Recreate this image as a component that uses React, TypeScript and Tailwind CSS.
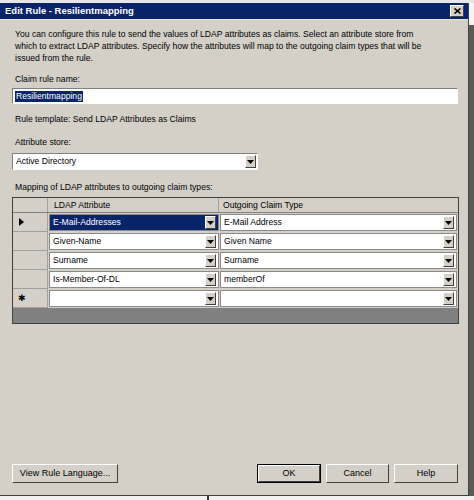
import React from 'react';

const font = { fontFamily: '"Liberation Sans", Arial, sans-serif' };

interface Mapeo {
  ldap: string;
  claim: string;
}

const filas: Mapeo[] = [
  { ldap: 'E-Mail-Addresses', claim: 'E-Mail Address' },
  { ldap: 'Given-Name', claim: 'Given Name' },
  { ldap: 'Surname', claim: 'Surname' },
  { ldap: 'Is-Member-Of-DL', claim: 'memberOf' },
];

function Flecha() {
  return (
    <svg width="7" height="4" viewBox="0 0 7 4">
      <path d="M0 0h7L3.5 4z" fill="#000" />
    </svg>
  );
}

// boton pequeño del combo
function BotonCombo({ alto = 'h-[13px]' }: { alto?: string }) {
  return (
    <div className={`w-[11px] ${alto} shrink-0 bg-[#d4d0c8] border border-t-white border-l-white border-r-[#404040] border-b-[#404040] flex items-center justify-center`}>
      <Flecha />
    </div>
  );
}

function Celda({ texto, sel, ancho }: { texto: string; sel?: boolean; ancho: string }) {
  return (
    <div className={`${ancho} h-[17px] flex items-center border border-[#8a8a8a] pr-[2px] ${sel ? 'bg-[#0a246a] text-white' : 'bg-white text-black'}`}>
      <span className="flex-1 pl-[3px] whitespace-nowrap overflow-hidden">{texto}</span>
      <BotonCombo />
    </div>
  );
}

function Boton({ texto, ancho, def }: { texto: string; ancho: string; def?: boolean }) {
  return (
    <div className={`${ancho} h-[19px] ${def ? 'border border-black' : ''}`}>
      <div className="w-full h-full bg-[#d4d0c8] border border-t-white border-l-white border-r-[#404040] border-b-[#404040] flex items-center justify-center text-[9px] text-black">
        {texto}
      </div>
    </div>
  );
}

export default function App() {
  return (
    <div style={font} className="w-[474px] h-[500px] bg-[#f2f2f2] flex flex-col overflow-hidden text-[8.6px] text-black">
      {/* lo que queda detras */}
      <div className="h-[3px] bg-[#e6e6e6]" />
      <div className="flex h-[493px]">
        <div className="w-[469px] h-full bg-[#d4d0c8] border-r border-b border-r-[#404040] border-b-[#404040] flex flex-col">
          {/* barra de titulo */}
          <div className="h-[16px] bg-[#0a246a] flex items-center justify-between pl-[5px] pr-[4px]">
            <span className="text-white font-bold text-[9.5px]">Edit Rule - Resilientmapping</span>
            <div className="w-[14px] h-[12px] bg-[#d4d0c8] border border-t-white border-l-white border-r-[#404040] border-b-[#404040] flex items-center justify-center">
              <svg width="7" height="6" viewBox="0 0 7 6">
                <path d="M0.5 0.5L6.5 5.5M6.5 0.5L0.5 5.5" stroke="#000" strokeWidth="1.6" />
              </svg>
            </div>
          </div>
          <div className="h-px bg-[#e8e6e0]" />

          <div className="flex-1 flex flex-col px-[12px] pb-[12px]">
            <p className="mt-[8px] pl-[3px] leading-[12px] whitespace-nowrap">
              You can configure this rule to send the values of LDAP attributes as claims. Select an attribute store from
              <br />
              which to extract LDAP attributes. Specify how the attributes will map to the outgoing claim types that will be
              <br />
              issued from the rule.
            </p>

            <p className="mt-[9px] pl-[3px] leading-[12px]">Claim rule name:</p>
            <div className="mt-[3px] w-[446px] h-[16px] bg-white border border-t-[#808080] border-l-[#808080] border-r-white border-b-white flex items-center pl-[2px]">
              <span className="bg-[#0a246a] text-white leading-[11px] px-px">Resilientmapping</span>
            </div>

            <p className="mt-[9px] pl-[3px] leading-[12px]">Rule template: Send LDAP Attributes as Claims</p>

            <p className="mt-[11px] pl-[3px] leading-[12px]">Attribute store:</p>
            <div className="mt-[5px] w-[246px] h-[17px] bg-white border border-t-[#808080] border-l-[#808080] border-r-white border-b-white flex items-center pl-[3px] pr-px">
              <span className="flex-1">Active Directory</span>
              <BotonCombo alto="h-[13px]" />
            </div>

            <p className="mt-[11px] pl-[3px] leading-[12px]">Mapping of LDAP attributes to outgoing claim types:</p>

            {/* rejilla */}
            <div className="mt-[4px] w-[447px] border border-[#404040] bg-[#808080] flex flex-col">
              <div className="h-[15px] flex bg-[#d4d0c8] border-b border-[#808080]">
                <div className="w-[35px] border-r border-[#a0a0a0]" />
                <div className="w-[171px] border-r border-[#a0a0a0] flex items-center pl-[6px]">LDAP Attribute</div>
                <div className="flex-1 flex items-center pl-[4px]">Outgoing Claim Type</div>
              </div>
              {filas.map((f, i) => (
                <div key={f.ldap} className="h-[19px] flex items-center bg-[#d4d0c8]">
                  <div className="w-[35px] h-full border-r border-b border-[#a0a0a0] flex items-center pl-[6px]">
                    {i === 0 && (
                      <svg width="5" height="8" viewBox="0 0 5 8">
                        <path d="M0 0L5 4L0 8z" fill="#000" />
                      </svg>
                    )}
                  </div>
                  <Celda texto={f.ldap} sel={i === 0} ancho="w-[170px] ml-px" />
                  <Celda texto={f.claim} ancho="flex-1 ml-px mr-px" />
                </div>
              ))}
              <div className="h-[19px] flex items-center bg-[#d4d0c8]">
                <div className="w-[35px] h-full border-r border-b border-[#a0a0a0] flex items-center pl-[5px] text-[9px] leading-none">✱</div>
                <Celda texto="" ancho="w-[170px] ml-px" />
                <Celda texto="" ancho="flex-1 ml-px mr-px" />
              </div>
              <div className="h-[15px] bg-[#808080]" />
            </div>

            <div className="flex-1" />

            <div className="flex items-center justify-between w-[446px]">
              <Boton texto="View Rule Language..." ancho="w-[106px]" />
              <div className="flex gap-[5px]">
                <Boton texto="OK" ancho="w-[64px]" def />
                <Boton texto="Cancel" ancho="w-[63px]" />
                <Boton texto="Help" ancho="w-[64px]" />
              </div>
            </div>
          </div>
        </div>
        <div className="flex-1 flex flex-col">
          <div className="h-[22px] bg-[#f4f4f4]" />
          <div className="flex-1 bg-[#5a5a5a]" />
        </div>
      </div>
      <div className="flex-1 flex">
        <div className="ml-[207px] w-[2px] bg-[#333]" />
      </div>
    </div>
  );
}
